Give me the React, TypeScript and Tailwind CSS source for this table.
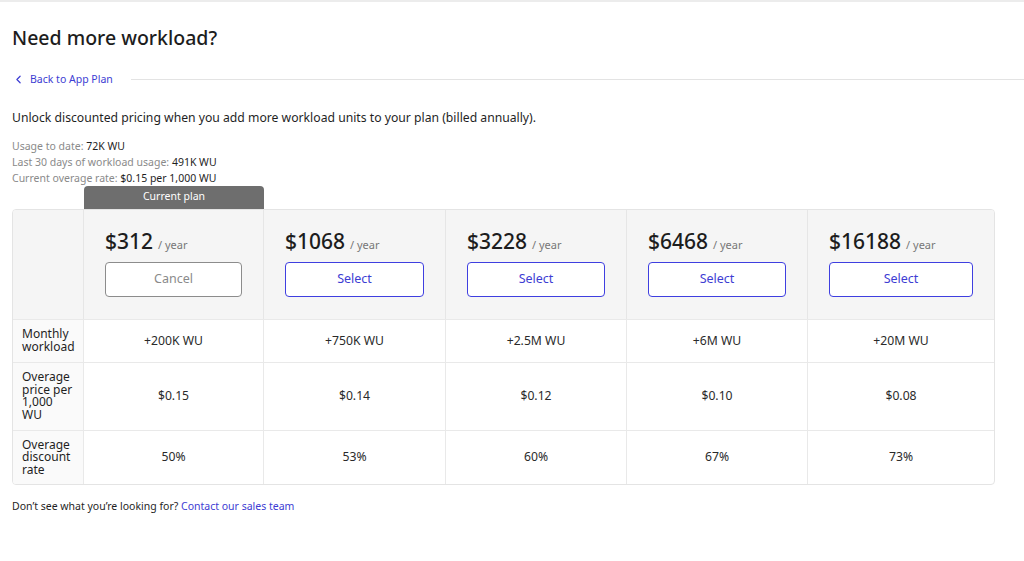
import { ChevronLeft } from "lucide-react";

type Plan = {
  price: string;
  workload: string;
  overage: string;
  discount: string;
  current?: boolean;
};

const plans: Plan[] = [
  { price: "$312", workload: "+200K WU", overage: "$0.15", discount: "50%", current: true },
  { price: "$1068", workload: "+750K WU", overage: "$0.14", discount: "53%" },
  { price: "$3228", workload: "+2.5M WU", overage: "$0.12", discount: "60%" },
  { price: "$6468", workload: "+6M WU", overage: "$0.10", discount: "67%" },
  { price: "$16188", workload: "+20M WU", overage: "$0.08", discount: "73%" },
];

const rows: { label: string; key: "workload" | "overage" | "discount"; h: string }[] = [
  { label: "Monthly workload", key: "workload", h: "h-[43px]" },
  { label: "Overage price per 1,000 WU", key: "overage", h: "h-[68px]" },
  { label: "Overage discount rate", key: "discount", h: "h-[54px]" },
];

const cols = "grid-cols-[71px_180px_182px_181px_181px_1fr]";

export default function App() {
  return (
    <div className="min-h-[561px] border-t-2 border-[#ececec] bg-white font-['Noto_Sans',sans-serif] text-[#1f1f1f]">
      <div className="px-3">
        <h1 className="pt-[22px] text-[19.5px] font-medium leading-7 text-[#1d1d1d]">Need more workload?</h1>

        <div className="mt-[20px] flex items-center">
          <a className="flex items-center gap-[5px] text-[10.5px] text-[#3d3dd3]">
            <ChevronLeft size={13} strokeWidth={2.2} />
            <span>Back to App Plan</span>
          </a>
          <div className="ml-[18px] h-px flex-1 bg-[#e3e3e3] -mr-3" />
        </div>

        <p className="mt-[20px] text-[12.2px] leading-5 text-[#1f1f1f]">
          Unlock discounted pricing when you add more workload units to your plan (billed annually).
        </p>

        <div className="mt-[10px] text-[10.5px] leading-4 text-[#8a8a8a]">
          <div>
            Usage to date: <span className="text-[#1f1f1f]">72K WU</span>
          </div>
          <div>
            Last 30 days of workload usage: <span className="text-[#1f1f1f]">491K WU</span>
          </div>
          <div>
            Current overage rate: <span className="text-[#1f1f1f]">$0.15 per 1,000 WU</span>
          </div>
        </div>

        <div className="w-[983px]">
          <div className="grid grid-cols-[72px_180px_1fr]">
            <div />
            <div className="flex h-[23px] items-center justify-center rounded-t-[4px] bg-[#6e6e6e] text-[10.5px] text-white">
              Current plan
            </div>
          </div>

          <div className="overflow-hidden rounded-[4px] border border-[#e4e4e4]">
            <div className={`grid h-[109px] bg-[#f5f5f5] ${cols}`}>
              <div className="border-r border-[#e6e6e6]" />
              {plans.map((p, i) => (
                <div
                  key={p.price}
                  className={`flex flex-col px-[21px] pt-[19px] ${i < plans.length - 1 ? "border-r border-[#e6e6e6]" : ""}`}
                >
                  <div className="flex items-baseline gap-[5px]">
                    <span className="text-[21px] font-medium leading-6 text-[#1d1d1d]">{p.price}</span>
                    <span className="text-[11px] text-[#777]">/ year</span>
                  </div>
                  <button
                    className={`mt-[9px] h-[35px] w-full rounded-[4px] border bg-white text-[12.5px] ${
                      p.current ? "border-[#8c8c8c] text-[#8a8a8a]" : "border-[#3f3fe0] text-[#3d3dd3]"
                    }`}
                  >
                    {p.current ? "Cancel" : "Select"}
                  </button>
                </div>
              ))}
            </div>

            {rows.map((r) => (
              <div key={r.key} className={`grid border-t border-[#e9e9e9] ${cols} ${r.h}`}>
                <div className="flex items-center border-r border-[#e9e9e9] bg-[#fafafa] pl-[9px] pr-[10px] text-[12px] leading-[12.5px] text-[#1f1f1f]">
                  {r.label}
                </div>
                {plans.map((p, i) => (
                  <div
                    key={p.price}
                    className={`flex items-center justify-center text-[12.2px] text-[#2a2a2a] ${
                      i < plans.length - 1 ? "border-r border-[#e9e9e9]" : ""
                    }`}
                  >
                    {p[r.key]}
                  </div>
                ))}
              </div>
            ))}
          </div>
        </div>

        <p className="mt-[13px] text-[10.5px] leading-4 text-[#1f1f1f]">
          Don’t see what you’re looking for? <a className="text-[#3d3dd3]">Contact our sales team</a>
        </p>
      </div>
    </div>
  );
}
